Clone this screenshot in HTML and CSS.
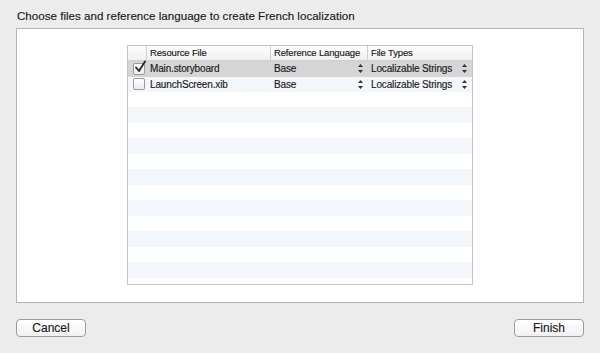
FILE: index.html
```html
<!DOCTYPE html>
<html lang="en">
<head>
    <meta charset="UTF-8">
    <title>Localization</title>
    <link rel="stylesheet" href="styles.css">
</head>
<body>
    <div class="title">Choose files and reference language to create French localization</div>

    <div class="panel">
        <div class="table">
            <div class="header">
                <div class="hcell check-col"></div>
                <div class="hcell">Resource File</div>
                <div class="hcell">Reference Language</div>
                <div class="hcell">File Types</div>
            </div>
            <div class="rows">
                <div class="row selected">
                    <div class="cell check-col">
                        <span class="checkbox">
                            <svg class="tick" width="14" height="14" viewBox="0 0 14 14"><path d="M3 7.5 L6 11 L12 1.5" fill="none" stroke="#222" stroke-width="1.8" stroke-linecap="round" stroke-linejoin="round"/></svg>
                        </span>
                    </div>
                    <div class="cell">Main.storyboard</div>
                    <div class="cell popup">Base <svg class="arrows" width="5" height="9" viewBox="0 0 5 9"><path d="M2.5 0 L5 3 L0 3 Z M2.5 9 L5 6 L0 6 Z" fill="#333"/></svg></div>
                    <div class="cell popup">Localizable Strings <svg class="arrows" width="5" height="9" viewBox="0 0 5 9"><path d="M2.5 0 L5 3 L0 3 Z M2.5 9 L5 6 L0 6 Z" fill="#333"/></svg></div>
                </div>
                <div class="row">
                    <div class="cell check-col"><span class="checkbox"></span></div>
                    <div class="cell">LaunchScreen.xib</div>
                    <div class="cell popup">Base <svg class="arrows" width="5" height="9" viewBox="0 0 5 9"><path d="M2.5 0 L5 3 L0 3 Z M2.5 9 L5 6 L0 6 Z" fill="#333"/></svg></div>
                    <div class="cell popup">Localizable Strings <svg class="arrows" width="5" height="9" viewBox="0 0 5 9"><path d="M2.5 0 L5 3 L0 3 Z M2.5 9 L5 6 L0 6 Z" fill="#333"/></svg></div>
                </div>
            </div>
        </div>
    </div>

    <div class="footer">
        <button class="btn">Cancel</button>
        <button class="btn">Finish</button>
    </div>
</body>
</html>
```

FILE: styles.css
```css
body {
    margin: 0;
    background: #ececec;
    font-family: "Liberation Sans", Arial, sans-serif;
    color: #1a1a1a;
    height: 353px;
    overflow: hidden;
}
.title {
    font-size: 11.6px;
    padding: 9px 0 0 17px;
    height: 19px;
    -webkit-text-stroke: 0.15px #1a1a1a;
}
.panel {
    box-sizing: border-box;
    margin: 0 16px;
    height: 275px;
    background: #fff;
    border: 1px solid #b4b4b4;
    display: flex;
    justify-content: center;
    padding-top: 16px;
}
.table {
    width: 344px;
    height: 238px;
    border: 1px solid #c4c4c4;
    font-size: 10px;
    letter-spacing: -0.15px;
    -webkit-text-stroke: 0.15px #1a1a1a;
    display: flex;
    flex-direction: column;
}
.header,
.row {
    display: grid;
    grid-template-columns: 18px 124px 97px 1fr;
}
.header {
    height: 14px;
    border-bottom: 1px solid #cfcfcf;
    background: linear-gradient(#fdfdfd, #f0f0f0);
    font-size: 9.5px;
}
.hcell {
    border-left: 1px solid #d0d0d0;
    padding-left: 3px;
    line-height: 14px;
    white-space: nowrap;
    overflow: hidden;
}
.hcell.check-col {
    border-left: none;
}
.rows {
    flex: 1;
    background: repeating-linear-gradient(#fff 0 15.5px, #f3f6fa 15.5px 31px);
}
.row {
    height: 15.5px;
    line-height: 15.5px;
}
.row.selected {
    background: #d5d5d5;
}
.cell {
    padding-left: 4px;
    white-space: nowrap;
}
.check-col {
    padding-left: 0;
    display: flex;
    align-items: center;
    justify-content: center;
}
.checkbox {
    position: relative;
    width: 10px;
    height: 10px;
    border: 1px solid #9a9a9a;
    border-radius: 2px;
    background: linear-gradient(#ffffff, #ececec);
    margin-left: 4px;
}
.tick {
    position: absolute;
    left: -1px;
    top: -4px;
}
.popup {
    display: flex;
    align-items: center;
    justify-content: space-between;
    padding-right: 4px;
}
.row .cell:last-child {
    padding-right: 5px;
}
.footer {
    display: flex;
    justify-content: space-between;
    padding: 16px 16px 0;
}
.btn {
    width: 70px;
    height: 18px;
    border: 1px solid #9c9c9c;
    border-radius: 4px;
    background: linear-gradient(#ffffff, #f1f1f1);
    font-family: "Liberation Sans", Arial, sans-serif;
    font-size: 12px;
    color: #1a1a1a;
    -webkit-text-stroke: 0.15px #1a1a1a;
    padding: 0;
}
```
